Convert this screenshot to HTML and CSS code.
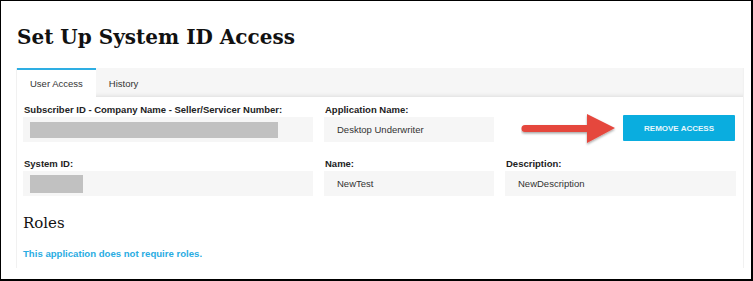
FILE: index.html
```html
<!DOCTYPE html>
<html>
<head>
<meta charset="utf-8">
<link rel="stylesheet" href="styles.css">
</head>
<body>
<div class="frame">
  <h1 class="title">Set Up System ID Access</h1>
  <div class="card">
    <div class="tabs">
      <div class="tab active">User Access</div>
      <div class="tab">History</div>
    </div>
    <div class="content">
      <div class="grid">
        <div class="cell">
          <div class="label">Subscriber ID - Company Name - Seller/Servicer Number:</div>
          <div class="field"><span class="redact wide"></span></div>
        </div>
        <div class="cell">
          <div class="label">Application Name:</div>
          <div class="field">Desktop Underwriter</div>
        </div>
        <div class="cell action">
          <svg class="arrow" width="96" height="34" viewBox="0 0 96 34">
            <defs>
              <filter id="sh" x="-10%" y="-20%" width="120%" height="150%">
                <feDropShadow dx="0" dy="1.5" stdDeviation="1.2" flood-color="#000" flood-opacity="0.35"/>
              </filter>
            </defs>
            <g filter="url(#sh)">
              <path d="M4 12 H66 V1 L94 15 L66 30 V19 H4 A3.5 3.5 0 0 1 4 12 Z" fill="#e5473d"/>
            </g>
          </svg>
          <button class="btn">REMOVE ACCESS</button>
        </div>
        <div class="cell">
          <div class="label">System ID:</div>
          <div class="field"><span class="redact short"></span></div>
        </div>
        <div class="cell">
          <div class="label">Name:</div>
          <div class="field">NewTest</div>
        </div>
        <div class="cell">
          <div class="label">Description:</div>
          <div class="field">NewDescription</div>
        </div>
      </div>
      <h2 class="roles">Roles</h2>
      <p class="note">This application does not require roles.</p>
    </div>
  </div>
</div>
</body>
</html>
```

FILE: styles.css
```css
html, body {
  margin: 0;
  padding: 0;
  background: #fff;
}
.frame {
  width: 753px;
  height: 281px;
  box-sizing: border-box;
  border-style: solid;
  border-color: #000;
  border-width: 1px 2px 2px 1px;
  padding: 0 7px 0 15px;
  overflow: hidden;
  font-family: "Liberation Sans", Arial, sans-serif;
}
.title {
  margin: 24px 0 19px 1px;
  font-family: "DejaVu Serif", serif;
  font-weight: bold;
  font-size: 20px;
  line-height: 24px;
  color: #111;
}
.card {
  border-left: 1px solid #f1f1f1;
  border-right: 1px solid #f1f1f1;
  height: 200px;
}
.tabs {
  display: flex;
  height: 29px;
  background: #f6f6f6;
  box-shadow: inset 0 -4px 4px -3px rgba(0,0,0,0.10);
}
.tab {
  display: flex;
  align-items: center;
  padding: 0 13px;
  font-size: 9.5px;
  line-height: 12px;
  color: #333;
  border-top: 2px solid transparent;
}
.tab.active {
  background: #fff;
  border-top-color: #2eaee3;
  height: 28px;
}
.content {
  padding: 7px 6px 0 6px;
}
.grid {
  display: grid;
  grid-template-columns: 290px 170px 231px;
  column-gap: 11px;
  row-gap: 16px;
}
.cell {
  display: flex;
  flex-direction: column;
}
.label {
  font-size: 9.5px;
  line-height: 12px;
  font-weight: bold;
  color: #222;
  padding-left: 1px;
  margin-bottom: 1px;
  white-space: nowrap;
}
.field {
  height: 25px;
  background: #f6f6f6;
  display: flex;
  align-items: center;
  padding-left: 13px;
  font-size: 9.5px;
  line-height: 12px;
  color: #333;
}
.redact {
  display: block;
  background: #c1c1c1;
  margin-left: -6px;
}
.redact.wide {
  width: 248px;
  height: 16px;
}
.redact.short {
  width: 53px;
  height: 18px;
}
.action {
  position: relative;
  flex-direction: row;
  justify-content: flex-end;
  align-items: flex-end;
}
.arrow {
  position: absolute;
  left: 16px;
  top: 9px;
}
.btn {
  width: 112px;
  height: 26px;
  margin: 0 1px 1px 0;
  border: none;
  border-radius: 1px;
  background: #0aaddf;
  color: #e6f6fc;
  font-family: "Liberation Sans", Arial, sans-serif;
  font-weight: bold;
  font-size: 8px;
  padding: 0;
}
.roles {
  margin: 18px 0 0 0;
  font-family: "DejaVu Serif", serif;
  font-weight: normal;
  font-size: 15px;
  line-height: 18px;
  color: #111;
}
.note {
  margin: 16px 0 0 0;
  font-size: 9.6px;
  line-height: 12px;
  font-weight: bold;
  color: #2aace2;
}
```
